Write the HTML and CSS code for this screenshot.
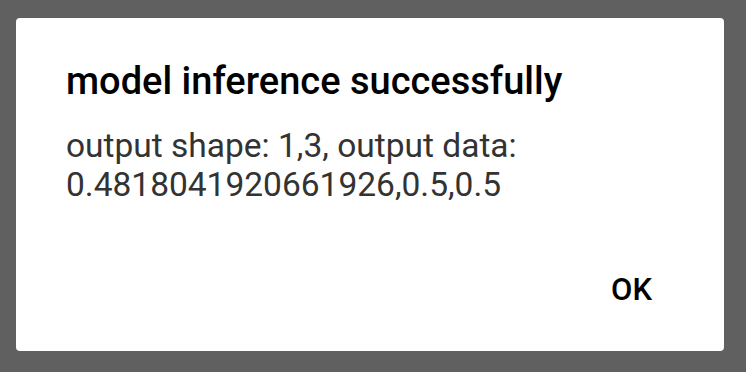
FILE: index.html
```html
<!DOCTYPE html>
<html>
<head>
<meta charset="utf-8">
<link rel="stylesheet" href="styles.css">
</head>
<body>
<div class="screen">
  <div class="dialog">
    <h1 class="title">model inference successfully</h1>
    <p class="message">output shape: 1,3, output data:<br>0.4818041920661926,0.5,0.5</p>
    <div class="actions">
      <button class="btn">OK</button>
    </div>
  </div>
</div>
</body>
</html>
```
FILE: styles.css
```css
html, body {
  margin: 0;
  padding: 0;
  width: 746px;
  height: 372px;
  overflow: hidden;
  background: #606060;
}
.screen {
  padding: 18px 22px 21px 16px;
  height: 372px;
  box-sizing: border-box;
  font-family: Roboto, "Noto Sans", sans-serif;
}
.dialog {
  background: #fff;
  border-radius: 4px;
  height: 333px;
  box-sizing: border-box;
  padding: 41px 50px 0 50px;
  display: flex;
  flex-direction: column;
}
.title {
  margin: 0;
  font-size: 38px;
  font-weight: 500;
  line-height: 44px;
  color: #000;
}
.message {
  margin: 23px 0 0 0;
  font-size: 33.5px;
  line-height: 39px;
  color: #333;
}
.actions {
  display: flex;
  justify-content: flex-end;
  margin-top: 68px;
}
.btn {
  font-family: Roboto, "Noto Sans", sans-serif;
  font-size: 31px;
  font-weight: 500;
  line-height: 36px;
  border: none;
  background: none;
  color: #000;
  padding: 0;
  margin-right: 22px;
}
```
